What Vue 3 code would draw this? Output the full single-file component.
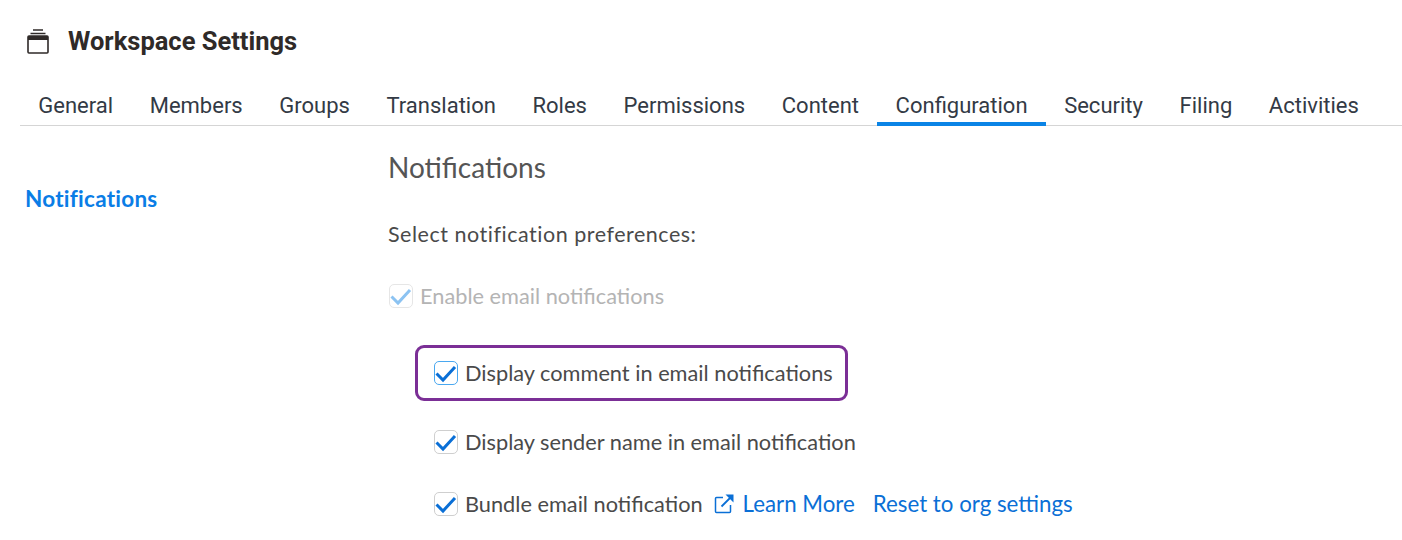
<template>
  <div class="page">
    <header class="title-row">
      <svg class="ws-icon" width="22" height="25" viewBox="0 0 22 25" fill="none">
        <path d="M6 1h10M3.5 4.5h15" stroke="#2f2a28" stroke-width="1.4" />
        <rect x="1" y="7" width="20" height="17" rx="1" stroke="#2f2a28" stroke-width="1.6" />
        <rect x="1" y="7" width="20" height="4" fill="#2f2a28" />
      </svg>
      <h1 class="title">Workspace Settings</h1>
    </header>

    <nav class="tabs">
      <a
        v-for="tab in tabs"
        :key="tab"
        class="tab"
        :class="{ active: tab === activeTab }"
      >{{ tab }}</a>
    </nav>

    <div class="body">
      <aside class="side">
        <a class="side-link">Notifications</a>
      </aside>
      <main class="content">
        <h2 class="heading">Notifications</h2>
        <p class="intro">Select notification preferences:</p>

        <div class="option disabled">
          <span class="box">
            <svg width="24" height="24" viewBox="0 0 24 24" fill="none">
              <path d="M2.5 12.5l6.5 6.5L21 6" stroke="currentColor" stroke-width="3" />
            </svg>
          </span>
          <span>Enable email notifications</span>
        </div>

        <div class="sub-options">
          <div class="highlight">
            <div class="option">
              <span class="box focused">
                <svg width="24" height="24" viewBox="0 0 24 24" fill="none">
                  <path d="M2.5 12.5l6.5 6.5L21 6" stroke="currentColor" stroke-width="3" />
                </svg>
              </span>
              <span>Display comment in email notifications</span>
            </div>
          </div>

          <div class="option sender">
            <span class="box">
              <svg width="24" height="24" viewBox="0 0 24 24" fill="none">
                <path d="M2.5 12.5l6.5 6.5L21 6" stroke="currentColor" stroke-width="3" />
              </svg>
            </span>
            <span>Display sender name in email notification</span>
          </div>

          <div class="option bundle">
            <span class="box">
              <svg width="24" height="24" viewBox="0 0 24 24" fill="none">
                <path d="M2.5 12.5l6.5 6.5L21 6" stroke="currentColor" stroke-width="3" />
              </svg>
            </span>
            <span>Bundle email notification</span>
            <a class="link learn">
              <svg width="20" height="20" viewBox="0 0 20 20" fill="none">
                <path d="M9 3.5H2.5a1 1 0 0 0-1 1v13a1 1 0 0 0 1 1h13a1 1 0 0 0 1-1V11" stroke="currentColor" stroke-width="1.5" />
                <path d="M7.5 12.5l9-9" stroke="currentColor" stroke-width="1.8" />
                <path d="M11.5 0.5h8v8z" fill="currentColor" />
              </svg>
              Learn More
            </a>
            <a class="link reset">Reset to org settings</a>
          </div>
        </div>
      </main>
    </div>
  </div>
</template>

<script setup>
const tabs = [
  'General',
  'Members',
  'Groups',
  'Translation',
  'Roles',
  'Permissions',
  'Content',
  'Configuration',
  'Security',
  'Filing',
  'Activities',
];
const activeTab = 'Configuration';
</script>

<style>
body {
  background: #fff;
}
</style>

<style scoped>
.page {
  width: 1402px;
  height: 540px;
  overflow: hidden;
  padding: 26px 0 0 20px;
  box-sizing: border-box;
  font-family: Lato, sans-serif;
  color: #4a4a4a;
}

.title-row {
  display: flex;
  align-items: center;
  height: 30px;
  padding-left: 7px;
}

.title {
  margin: 0 0 0 19px;
  font-family: Roboto, sans-serif;
  font-size: 25.5px;
  font-weight: 700;
  color: #2f2a28;
}

.tabs {
  display: flex;
  margin-top: 19px;
  border-bottom: 1px solid #d5d5d5;
  height: 51px;
  box-sizing: border-box;
}

.tab {
  padding: 0 18.3px;
  font-family: Roboto, sans-serif;
  font-size: 22px;
  line-height: 61px;
  height: 51px;
  box-sizing: border-box;
  color: #333a45;
}

.tab.active {
  border-bottom: 4px solid #0a84e6;
}

.body {
  display: flex;
}

.side {
  width: 368px;
  padding: 59px 0 0 5px;
  box-sizing: border-box;
}

.side-link {
  font-size: 22.5px;
  font-weight: 700;
  letter-spacing: 0.25px;
  color: #0a7de6;
}

.heading {
  margin: 24px 0 0;
  font-size: 28px;
  font-weight: 400;
  line-height: 34px;
  color: #555;
}

.intro {
  margin: 37px 0 0;
  font-size: 21.5px;
  letter-spacing: 0.52px;
  line-height: 26px;
}

.option {
  display: flex;
  align-items: center;
  gap: 7px;
  font-size: 21.75px;
  line-height: 26px;
}

.option.disabled {
  margin-top: 36px;
  margin-left: 1px;
  color: #b4b4b4;
}

.box {
  display: flex;
  width: 24px;
  height: 24px;
  border: 1px solid #cfcfcf;
  border-radius: 5px;
  box-sizing: border-box;
  align-items: center;
  justify-content: center;
  color: #0a6fd6;
}

.box svg {
  flex: none;
}

.disabled .box {
  border-color: #e6e6e6;
  color: #8cc3f2;
}

.box.focused {
  border-color: #4aa8f0;
}

.sub-options {
  margin-top: 36px;
  margin-left: 27px;
}

.highlight {
  display: inline-block;
  border: 3px solid #7b2f96;
  border-radius: 9px;
  padding: 12px 12px 12px 16px;
}

.sender {
  margin-top: 28px;
  margin-left: 19px;
}

.bundle {
  margin-top: 36px;
  margin-left: 19px;
}

.link {
  display: inline-flex;
  align-items: center;
  font-size: 22.3px;
  color: #0a6fd6;
}

.learn {
  gap: 9px;
  margin-left: 4px;
}

.reset {
  margin-left: 11px;
}
</style>
